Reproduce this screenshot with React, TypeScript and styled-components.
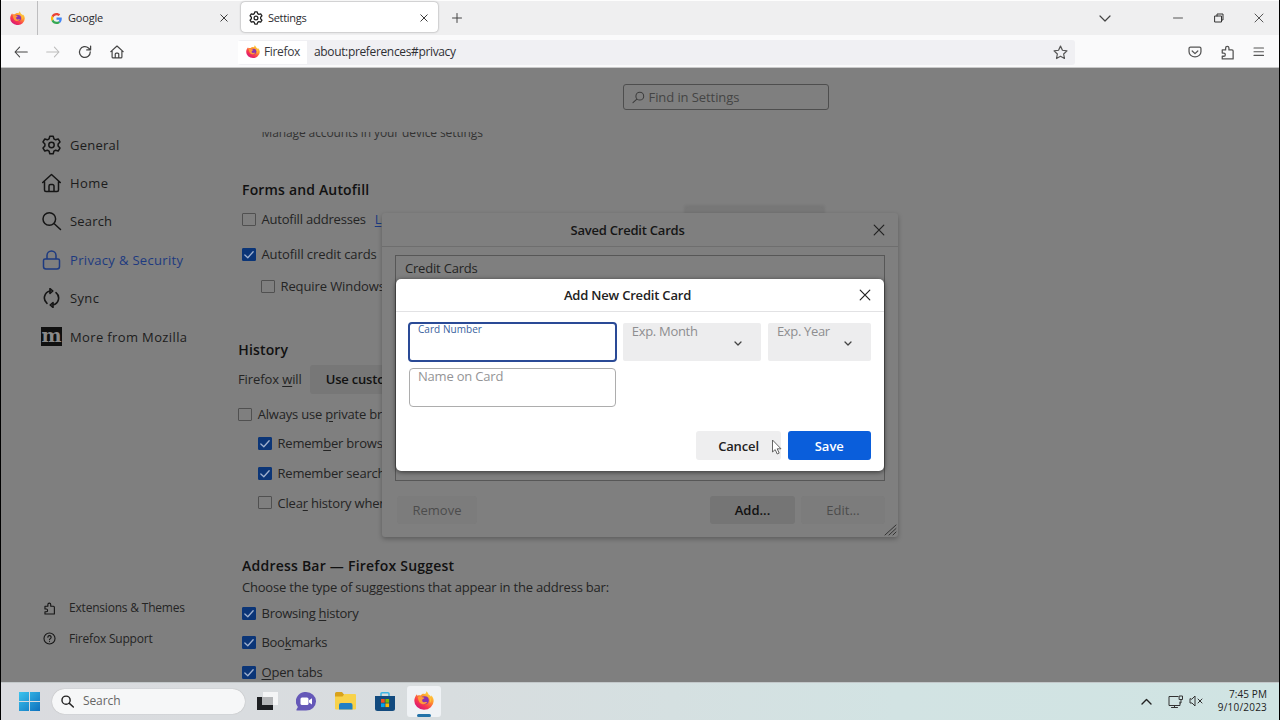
import React from "react";
import styled, { createGlobalStyle, css } from "styled-components";

const Global = createGlobalStyle`
  * { box-sizing: border-box; }
  body { margin: 0; background: #000; font-family: "Open Sans", "Noto Sans", sans-serif; font-size: 13px; }
  svg { display: block; flex: none; }
`;

const Screen = styled.div`
  width: 1280px;
  height: 720px;
  padding: 0 1px;
  background: #000;
  display: flex;
  flex-direction: column;
  overflow: hidden;
  position: relative;
`;

const Text = styled.span<{ $size?: number; $ls?: number; $color?: string; $weight?: number }>`
  font-size: ${(p) => p.$size ?? 13}px;
  letter-spacing: ${(p) => p.$ls ?? -0.2}px;
  color: ${(p) => p.$color ?? "#242424"};
  font-weight: ${(p) => p.$weight ?? 400};
  line-height: 20px;
  white-space: nowrap;
  u { text-underline-offset: 2px; }
`;

/* ---------- browser chrome ---------- */
const TabBar = styled.div`
  height: 35px;
  flex: none;
  display: flex;
  background: #efeff0;
  border-top: 1px solid #fdfdfd;
`;
const PinnedTab = styled.div`
  width: 37px;
  padding-left: 9px;
  display: flex;
  align-items: center;
  border-right: 1px solid #bdbdbf;
`;
const Tab = styled.div<{ $active?: boolean; $width: number }>`
  width: ${(p) => p.$width}px;
  display: flex;
  align-items: center;
  padding: ${(p) => (p.$active ? "1px 10px 0 8px" : "0 13px 0 12.5px")};
  gap: ${(p) => (p.$active ? 5 : 6.5)}px;
  ${(p) =>
    p.$active &&
    css`
      height: 30px;
      margin-top: 1px;
      background: #fff;
      border-radius: 4px;
      box-shadow: 0 0 2px rgba(0, 0, 0, 0.45);
    `}
`;
const Spacer = styled.div`
  flex: 1;
`;
const NewTab = styled.div`
  width: 38px;
  display: grid;
  place-items: center;
`;
const WindowControls = styled.div`
  display: flex;
  align-items: center;
  gap: 30.5px;
  padding-right: 15px;
`;
const ListTabs = styled.div`
  display: flex;
  align-items: center;
  padding-right: 62px;
`;
const NavBar = styled.div`
  height: 33px;
  flex: none;
  display: flex;
  align-items: center;
  padding-top: 2px;
  background: #fafafb;
  border-bottom: 1px solid #c9c9c9;
`;
const NavButtons = styled.div`
  width: 237px;
  padding-left: 13px;
  display: flex;
  align-items: center;
  gap: 18px;
`;
const UrlBar = styled.div`
  width: 837px;
  height: 25px;
  display: flex;
  align-items: center;
  background: #f0f0f3;
  border-radius: 3px;
  padding-right: 7px;
`;
const Identity = styled.div`
  width: 69px;
  height: 23px;
  display: flex;
  align-items: center;
  gap: 4px;
  padding-left: 8px;
  margin-right: 7px;
  background: #fff;
`;
const ToolbarIcons = styled.div`
  flex: 1;
  display: flex;
  align-items: center;
  justify-content: flex-end;
  gap: 18px;
  padding-right: 14px;
`;

/* ---------- preferences page ---------- */
const Page = styled.div`
  height: 614px;
  flex: none;
  display: flex;
  background: #7f7f7f;
  overflow: hidden;
`;
const Sidebar = styled.div`
  width: 237px;
  padding: 57.5px 0 0 40px;
  display: flex;
  flex-direction: column;
`;
const Category = styled.div`
  height: 38.4px;
  display: flex;
  align-items: center;
  gap: 8px;
`;
const SideFooter = styled.div`
  margin-top: 237px;
  padding-left: 2px;
`;
const FooterLink = styled.div`
  height: 30.5px;
  display: flex;
  align-items: center;
  gap: 13px;
`;
const Main = styled.div`
  flex: 1;
  display: flex;
  flex-direction: column;
`;
const SearchArea = styled.div`
  height: 64px;
  flex: none;
  padding: 16px 0 0 385px;
`;
const FindBox = styled.div`
  width: 206px;
  height: 26px;
  display: flex;
  align-items: center;
  gap: 3.5px;
  padding-left: 8px;
  border: 1px solid #4e4e4e;
  border-radius: 3px;
`;
const Scroller = styled.div`
  flex: 1;
  overflow: hidden;
  display: flex;
  flex-direction: column;
`;
const Row = styled.div<{ $top: number; $left: number }>`
  height: 20px;
  flex: none;
  display: flex;
  align-items: center;
  margin-top: ${(p) => p.$top}px;
  padding-left: ${(p) => p.$left}px;
`;
const Box = styled.span<{ $checked?: boolean }>`
  width: 14px;
  height: 13px;
  flex: none;
  margin-right: 5.5px;
  display: grid;
  place-items: center;
  border-radius: 1px;
  border: 1px solid ${(p) => (p.$checked ? "#0b3577" : "#505050")};
  background: ${(p) => (p.$checked ? "#0b3577" : "transparent")};
`;
const LearnMore = styled.span`
  margin-left: 9px;
`;
const HistoryMode = styled.div`
  width: 90px;
  height: 29px;
  margin-left: 8px;
  padding-left: 16px;
  display: flex;
  align-items: center;
  background: #777;
  border-radius: 3px;
`;

/* ---------- dialogs, stacked over the page ---------- */
const GhostButton = styled.div`
  position: absolute;
  left: 684px;
  top: 205px;
  width: 141px;
  height: 12px;
  background: #777;
  border-radius: 3px;
  filter: blur(1px);
`;
const SavedDialog = styled.div`
  position: absolute;
  left: 382px;
  top: 213px;
  width: 516px;
  height: 324px;
  background: #7f7f7f;
  border-radius: 3px;
  box-shadow: 0 2px 5px rgba(0, 0, 0, 0.27);
  display: flex;
  flex-direction: column;
`;
const DialogHeader = styled.div<{ $height: number; $line: string; $pad: number }>`
  height: ${(p) => p.$height}px;
  flex: none;
  display: flex;
  align-items: center;
  border-bottom: 1px solid ${(p) => p.$line};
  padding-right: ${(p) => p.$pad}px;
`;
const DialogTitle = styled.div`
  flex: 1;
  text-align: center;
`;
const CardList = styled.div`
  height: 226px;
  margin: 8px 13px 0;
  padding: 2px 9px;
  border: 1px solid #575757;
`;
const DialogButtons = styled.div`
  display: flex;
  padding: 15px 13px 0 15px;
  gap: 6px;
`;
const DimButton = styled.div<{ $width: number; $bg: string }>`
  width: ${(p) => p.$width}px;
  height: 28px;
  display: grid;
  place-items: center;
  border-radius: 3px;
  background: ${(p) => p.$bg};
`;
const Grip = styled.div`
  position: absolute;
  right: 1px;
  bottom: 1px;
`;
const AddDialog = styled.div`
  position: absolute;
  left: 396px;
  top: 279px;
  width: 488px;
  height: 192px;
  background: #fff;
  border-radius: 5px;
  box-shadow: 0 1px 5px rgba(0, 0, 0, 0.6);
  display: flex;
  flex-direction: column;
`;
const Form = styled.div`
  display: grid;
  grid-template-columns: 209px 138px 103px;
  grid-template-rows: 40px 39px;
  column-gap: 6.5px;
  row-gap: 6px;
  padding: 10px 12px 0;
`;
const Field = styled.div<{ $focus?: boolean }>`
  margin: ${(p) => (p.$focus ? 0 : "0 1px")};
  padding: 0 8px;
  border: ${(p) => (p.$focus ? "2px solid #2a4a96" : "1px solid #adadad")};
  border-radius: 4px;
  display: flex;
  align-items: flex-start;
  > span { margin-top: ${(p) => (p.$focus ? -5 : -3)}px; }
`;
const Select = styled.div<{ $shift?: number }>`
  margin: 1px ${(p) => p.$shift ?? 0}px 1px -${(p) => p.$shift ?? 0}px;
  padding: 2px 19px 0 9px;
  background: #ededee;
  border-radius: 2px;
  display: flex;
  align-items: center;
  justify-content: space-between;
  > span { align-self: flex-start; margin-top: -4px; }
`;
const Actions = styled.div`
  display: flex;
  justify-content: flex-end;
  gap: 6.5px;
  padding: 24px 13px 0;
`;
const Button = styled.div<{ $primary?: boolean }>`
  width: ${(p) => (p.$primary ? 83.5 : 85)}px;
  height: 29px;
  display: grid;
  place-items: center;
  border-radius: 3px;
  background: ${(p) => (p.$primary ? "#0a5edb" : "#eeeeef")};
`;
const Pointer = styled.div`
  position: absolute;
  left: 771px;
  top: 439px;
`;

/* ---------- taskbar ---------- */
const Taskbar = styled.div`
  height: 38px;
  flex: none;
  display: flex;
  align-items: center;
  background: linear-gradient(90deg, #dadbdf 0%, #d8dddf 35%, #d2e3e3 70%, #d0e4e3 100%);
  border-top: 1px solid #c3c8ca;
  padding: 0 12px 1px 18px;
`;
const TaskSearch = styled.div`
  width: 193px;
  height: 25px;
  margin: 0 11.5px 0 12px;
  padding-left: 9px;
  display: flex;
  align-items: center;
  gap: 9px;
  background: #f6f7f8;
  border-radius: 13px;
  box-shadow: 0 0 1px #999;
`;
const TaskIcons = styled.div`
  display: flex;
  align-items: center;
  gap: 18.8px;
`;
const ActiveApp = styled.div`
  width: 34px;
  height: 31px;
  margin-left: -7px;
  display: flex;
  flex-direction: column;
  align-items: center;
  justify-content: space-between;
  padding-top: 5px;
  background: #eff2f5;
  border-radius: 3px;
`;
const ActiveMark = styled.div`
  width: 14px;
  height: 3px;
  border-radius: 2px;
  background: #2272a8;
`;
const Tray = styled.div`
  display: flex;
  align-items: center;
`;
const TrayGap = styled.div<{ $w: number }>`
  width: ${(p) => p.$w}px;
`;
const Clock = styled.div`
  width: 64px;
  display: flex;
  flex-direction: column;
  align-items: flex-end;
  > span { line-height: 13px; }
`;

/* ---------- icons ---------- */
const Firefox = ({ size }: { size: number }) => (
  <svg width={size} height={size * 0.95} viewBox="0 0 20 20" preserveAspectRatio="none">
    <defs>
      <linearGradient id="ffBody" x1="0.85" y1="0.05" x2="0.2" y2="0.95">
        <stop offset="0" stopColor="#ffe14a" />
        <stop offset="0.35" stopColor="#ff9a2e" />
        <stop offset="0.7" stopColor="#f8374f" />
        <stop offset="1" stopColor="#d3147b" />
      </linearGradient>
    </defs>
    <path
      fill="url(#ffBody)"
      d="M12.2 0.3c1.5 1 2 2.2 2.4 3.4 1.2.6 2 1.4 2.4 2.3.3-.4.2-1 0-1.6 2 1.600 2.700 4 2.700 6.200A9.700 9.300 0 0 1 10 19.700 9.700 9.300 0 0 1 .3 10.300C.3 7.500 1.500 5 3 3.300c0 .8.2 1.300.6 1.700.9-.4 2-.5 3-.3C8 3 9 2.400 11 3.200c.9-.6 1.300-1.600 1.200-2.900z"
    />
    <circle cx="10.600" cy="9.800" r="4.200" fill="#8a33b0" />
    <path fill="#ff9a3a" d="M3.800 6.200c1.700-1 3.400-.6 4.400.3 1.200 0 2 .3 2.200.9-.2.8-1.400.9-2 1.500-.4.9-.3 2 .6 2.600 1.500.9 3-.2 4.200.2-.7 1.700-2.600 2.600-4.600 2.200-2.700-.5-4.300-2.900-4.800-7.700z" />
    <path fill="#ffd23c" opacity=".75" d="M13.500 5c2.700 1.800 3.300 5 2 8.200 2.400-2 2.500-6.500-2-8.200z" />
  </svg>
);

const Google = () => (
  <svg width="11" height="11" viewBox="0 0 48 48">
    <path fill="#ea4335" d="M24 9.500c3.500 0 6.700 1.200 9.200 3.600l6.900-6.900C35.900 2.400 30.500 0 24 0 14.600 0 6.500 5.400 2.600 13.200l8 6.200C12.400 13.700 17.700 9.500 24 9.500z" />
    <path fill="#4285f4" d="M47 24.600c0-1.600-.2-3.100-.4-4.600H24v9h12.900c-.6 3-2.200 5.500-4.700 7.200l7.700 6C44.400 38 47 31.800 47 24.600z" />
    <path fill="#fbbc05" d="M10.500 28.600A14.500 14.500 0 0 1 10.500 19.400l-8-6.200a24 24 0 0 0 0 21.600z" />
    <path fill="#34a853" d="M24 48c6.500 0 11.900-2.100 15.900-5.800l-7.700-6c-2.200 1.500-4.900 2.300-8.200 2.300-6.300 0-11.600-4.200-13.500-9.900l-8 6.200C6.500 42.600 14.600 48 24 48z" />
  </svg>
);

const Stroke = ({ d, size = 14, h, vb = "0 0 20 20", color = "#3f3f43", sw = 1.5 }: {
  d: string; size?: number; h?: number; vb?: string; color?: string; sw?: number;
}) => (
  <svg width={size} height={h ?? size} viewBox={vb} fill="none" stroke={color} strokeWidth={sw} strokeLinecap="round" strokeLinejoin="round">
    <path d={d} />
  </svg>
);

const GEAR =
  "M8.300 1.200h3.400l.7 2.600 1.700 1 2.600-.8 1.800 2.900-1.900 2v2.200l1.900 2-1.800 2.900-2.600-.8-1.700 1-.7 2.600H8.300l-.7-2.600-1.700-1-2.600.8-1.800-2.900 1.900-2V8.900l-1.900-2L3.300 4l2.600.8 1.700-1zM7.300 10a2.700 2.700 0 1 0 5.400 0a2.700 2.700 0 1 0-5.400 0";
const HOME = "M1.200 9.500L10 1.500l8.800 8M3 8.500V17a1.500 1.500 0 0 0 1.500 1.500h11A1.500 1.500 0 0 0 17 17V8.500M7.500 18.500V13a1.500 1.500 0 0 1 1.500-1.500h2a1.500 1.500 0 0 1 1.500 1.500v5.500";
const LENS = "M1.500 8a6.300 6.300 0 1 0 12.600 0a6.300 6.300 0 1 0-12.600 0M12.500 12.500L19 18.500";
const LOCK = "M3.500 9h13A1.500 1.500 0 0 1 18 10.500v6a2.500 2.500 0 0 1-2.500 2.500h-11A2.500 2.500 0 0 1 2 16.500v-6A1.500 1.500 0 0 1 3.500 9zM5.500 9V5.500a4.500 4.500 0 0 1 9 0V9";
const SYNC = "M8.500 3A7 7 0 0 0 5.500 15.300M11.500 17A7 7 0 0 0 14.500 4.700M8.500 0.600V5.400L11.300 3zM11.500 14.600v4.800L8.700 17z";
const PUZZLE = "M3 6.500h4.500V4a2.200 2.200 0 0 1 4.400 0v2.500H16a1.500 1.500 0 0 1 1.500 1.500v10.500H3v-3.500h2a2.100 2.100 0 0 0 0-4.200H3z";
const CROSS = "M2 2l16 16M18 2L2 18";

const Check = ({ on }: { on?: boolean }) => (
  <Box $checked={on}>
    {on && <Stroke d="M2 6l3.200 3L11 2.500" size={12} h={11} vb="0 0 13 11" color="#9fb1cf" sw={1.4} />}
  </Box>
);

const MozillaMark = styled.span`
  width: 21px;
  height: 19px;
  flex: none;
  display: flex;
  justify-content: center;
  background: #101010;
  color: #8a8a8a;
  font: 700 19px/17px "DejaVu Serif", serif;
`;

const dim = "#151515";
const categories = [
  { label: "General", ls: 0.25, icon: <Stroke d={GEAR} size={21} h={20} color={dim} /> },
  { label: "Home", ls: 0.4, icon: <Stroke d={HOME} size={21} h={20} color={dim} /> },
  { label: "Search", ls: 0.17, icon: <Stroke d={LENS} size={21} h={20} color={dim} /> },
  { label: "Privacy & Security", ls: 0.33, icon: <Stroke d={LOCK} size={21} h={20} color="#1d3a80" />, color: "#1d3a80" },
  { label: "Sync", ls: 0.35, icon: <Stroke d={SYNC} size={21} h={20} color={dim} sw={1.6} /> },
  { label: "More from Mozilla", ls: 0.37, icon: <MozillaMark>m</MozillaMark> },
];

const Heading = ({ children, ls = 0.17 }: { children: React.ReactNode; ls?: number }) => (
  <Text $weight={600} $size={14} $color="#111" $ls={ls}>{children}</Text>
);

export default function App() {
  return (
    <>
      <Global />
      <Screen>
        <TabBar>
          <PinnedTab><Firefox size={15} /></PinnedTab>
          <Tab $width={203}>
            <Google />
            <Text $size={11} $color="#2b2b2f" $ls={-0.2}>Google</Text>
            <Spacer />
            <Stroke d={CROSS} size={8} color="#333" sw={2.4} />
          </Tab>
          <Tab $active $width={197}>
            <Stroke d={GEAR} size={14} color="#222" sw={1.8} />
            <Text $size={11} $color="#2b2b2f" $ls={-0.3}>Settings</Text>
            <Spacer />
            <Stroke d={CROSS} size={8} color="#333" sw={2.4} />
          </Tab>
          <NewTab><Stroke d="M10 1v18M1 10h18" size={10} color="#444" sw={2} /></NewTab>
          <Spacer />
          <ListTabs><Stroke d="M1 1l5 5 5-5" size={12} h={7} vb="0 0 12 7" color="#444" sw={1.2} /></ListTabs>
          <WindowControls>
            <Stroke d="M0.500 1h9" size={10} h={2} vb="0 0 10 2" color="#555" sw={1} />
            <Stroke d="M1 3h6.500v6H1zM3 3V1h6v6H7.500" size={10} vb="0 0 10 10" color="#333" sw={1} />
            <Stroke d={CROSS} size={10} color="#444" sw={1.8} />
          </WindowControls>
        </TabBar>

        <NavBar>
          <NavButtons>
            <Stroke d="M19 10H1.500M8 3l-6.500 7L8 17" size={14} color="#444" />
            <Stroke d="M1 10h17.500M12 3l6.500 7-6.500 7" size={14} color="#bbb" />
            <Stroke d="M17.500 10a7.700 7.700 0 1 1-2.500-5.600L18 7M18 1.500V7h-5.500" size={14} color="#444" sw={1.8} />
            <Stroke d={HOME} size={14} color="#444" sw={1.7} />
          </NavButtons>
          <UrlBar>
            <Identity>
              <Firefox size={14} />
              <Text $size={12} $color="#3a3a3e" $ls={-0.35}>Firefox</Text>
            </Identity>
            <Text $size={12} $color="#2f2f33" $ls={-0.35}>about:preferences#privacy</Text>
            <Spacer />
            <Stroke d="M10 1.500l2.600 5.500 6 .8-4.400 4.200 1.100 6L10 15.100 4.700 18l1.100-6L1.400 7.800l6-.8z" size={15} color="#555" sw={1.6} />
          </UrlBar>
          <ToolbarIcons>
            <Stroke d="M3.500 3h13A2 2 0 0 1 18.500 5v4.500a8.500 7.500 0 0 1-17 0V5a2 2 0 0 1 2-2zM6 8.500l4 3.800 4-3.800" size={14} color="#555" sw={1.8} />
            <Stroke d={PUZZLE} size={15} color="#555" sw={1.7} />
            <Stroke d="M1 1h9.500M1 4.700h9.500M1 8.400h9.500" size={12} h={10} vb="0 0 12 10" color="#555" sw={1.1} />
          </ToolbarIcons>
        </NavBar>

        <Page>
          <Sidebar>
            {categories.map((c) => (
              <Category key={c.label}>
                {c.icon}
                <Text $color={c.color ?? "#1c1c1c"} $ls={c.ls}>{c.label}</Text>
              </Category>
            ))}
            <SideFooter>
              <FooterLink>
                <Stroke d={PUZZLE} size={13} color={dim} sw={1.7} />
                <Text $size={12}>Extensions &amp; Themes</Text>
              </FooterLink>
              <FooterLink>
                <Stroke d="M1.500 10a8.500 8.500 0 1 0 17 0a8.500 8.500 0 1 0-17 0M7.500 8a2.500 2.500 0 1 1 3.800 2.200c-.9.6-1.300.9-1.300 1.800M10 14.600v.2" size={13} color={dim} sw={1.7} />
                <Text $size={12}>Firefox Support</Text>
              </FooterLink>
            </SideFooter>
          </Sidebar>

          <Main>
            <SearchArea>
              <FindBox>
                <Stroke d="M6 8a6 6 0 1 0 12 0a6 6 0 1 0-12 0M7.500 12.500L1.500 18" size={13} color="#3c3c3c" sw={1.6} />
                <Text $color="#444" $ls={-0.08}>Find in Settings</Text>
              </FindBox>
            </SearchArea>
            <Scroller>
              <Row $top={-9} $left={23.5}><Text $size={12} $color="#333" $ls={-0.11}>Manage accounts in your device settings</Text></Row>
              <Row $top={37} $left={4}><Heading>Forms and Autofill</Heading></Row>
              <Row $top={9} $left={4}><Check /><Text>Autofill addresses</Text><LearnMore><Text $color="#1d3a80"><u>L</u></Text></LearnMore></Row>
              <Row $top={15} $left={4}><Check on /><Text $ls={-0.1}>Autofill credit cards</Text></Row>
              <Row $top={12} $left={23}><Check /><Text $ls={-0.1}>Require Windows</Text></Row>
              <Row $top={44} $left={0.2}><Heading>History</Heading></Row>
              <Row $top={9} $left={0}>
                <Text $ls={-0.1}>Firefox <u>w</u>ill</Text>
                <HistoryMode><Text $weight={600} $color="#111">Use custom</Text></HistoryMode>
              </Row>
              <Row $top={15} $left={0.2}><Check /><Text>Always use <u>p</u>rivate brow</Text></Row>
              <Row $top={9} $left={20}><Check on /><Text>Remem<u>b</u>er browsing</Text></Row>
              <Row $top={10} $left={20}><Check on /><Text>Remember search</Text></Row>
              <Row $top={9.5} $left={20}><Check /><Text>Clea<u>r</u> history when</Text></Row>
              <Row $top={43.5} $left={4}><Heading ls={0.23}>Address Bar — Firefox Suggest</Heading></Row>
              <Row $top={1} $left={4}><Text $ls={-0.21}>Choose the type of suggestions that appear in the address bar:</Text></Row>
              <Row $top={6} $left={4}><Check on /><Text $ls={-0.27}>Browsing <u>h</u>istory</Text></Row>
              <Row $top={9} $left={4}><Check on /><Text $ls={-0.3}>Boo<u>k</u>marks</Text></Row>
              <Row $top={10} $left={4}><Check on /><Text><u>O</u>pen tabs</Text></Row>
            </Scroller>
          </Main>
        </Page>

        <Taskbar>
          <svg width="21" height="19" viewBox="0 0 21 19">
            <defs>
              <linearGradient id="win" x1="0" y1="0" x2="1" y2="1">
                <stop offset="0" stopColor="#3cc4ee" />
                <stop offset="1" stopColor="#0d70bd" />
              </linearGradient>
            </defs>
            <path fill="url(#win)" d="M0 0h10v9H0zM11 0h10v9H11zM0 10h10v9H0zM11 10h10v9H11z" />
          </svg>
          <TaskSearch>
            <Stroke d={LENS} size={13} color="#222" sw={2.2} />
            <Text $size={12} $color="#666" $ls={-0.1}>Search</Text>
          </TaskSearch>
          <TaskIcons>
            <svg width="21" height="18" viewBox="0 0 21 18">
              <rect x="6" y="0" width="15" height="13" fill="#f4f5f6" />
              <rect x="0" y="5" width="16" height="13" fill="#1d1f22" />
              <rect x="5" y="5" width="11" height="8" fill="#b4b6b8" />
            </svg>
            <svg width="20" height="19" viewBox="0 0 20 19">
              <path fill="#6558b8" d="M10 0a10 9.300 0 1 1 0 18.600H1.200c-.8 0-1-.7-.6-1.300L1.900 15A9.500 9.300 0 0 1 10 0z" />
              <rect x="4.500" y="5.500" width="8" height="7.500" rx="1.500" fill="#fff" />
              <path fill="#fff" d="M13 8.200l3-2v6.200l-3-2z" />
            </svg>
            <svg width="21" height="18" viewBox="0 0 21 18">
              <path fill="#d9a21b" d="M0 1.500A1.500 1.500 0 0 1 1.500 0H7l2 2.500V8H0z" />
              <path fill="#f8d24a" d="M0 4.500h7.500L9.500 2H20a1 1 0 0 1 1 1v13.500a1 1 0 0 1-1 1H1a1 1 0 0 1-1-1z" />
              <path fill="#1f7fc4" d="M4 17.500V13a2 2 0 0 1 2-2h9.500a2 2 0 0 1 2 2v4.500z" />
            </svg>
            <svg width="20" height="19" viewBox="0 0 20 19">
              <path fill="none" stroke="#3bb4e4" strokeWidth="1.500" d="M6 4V1.800A1 1 0 0 1 7 .8h6a1 1 0 0 1 1 1V4" />
              <path fill="#124a7e" d="M0 4h20v12.500A2.500 2.500 0 0 1 17.500 19h-15A2.500 2.500 0 0 1 0 16.500z" />
              <path fill="#f25022" d="M6 7h3.700v3.700H6z" />
              <path fill="#7fba00" d="M10.400 7h3.700v3.700h-3.700z" />
              <path fill="#00a4ef" d="M6 11.400h3.700v3.700H6z" />
              <path fill="#ffb900" d="M10.400 11.400h3.700v3.700h-3.700z" />
            </svg>
            <ActiveApp><Firefox size={20} /><ActiveMark /></ActiveApp>
          </TaskIcons>
          <Spacer />
          <Tray>
            <Stroke d="M1 6l4.500-4.500L10 6" size={11} h={7} vb="0 0 11 7" color="#222" sw={1.4} />
            <TrayGap $w={16} />
            <Stroke d="M10 1.500H1v9h11V7M3.500 12.500h6M6.500 10.500v2M11.500 1h3v3.500h-3zM13 4.500V8h-1" size={15} h={13} vb="0 0 15 13" color="#333" sw={1} />
            <TrayGap $w={6} />
            <Stroke d="M1 4v4h2l3 3V1L3 4zM9 4l4 4M13 4L9 8" size={14} h={12} vb="0 0 14 12" color="#333" sw={1} />
            <Clock>
              <Text $size={10} $color="#222" $ls={0.1}>7:45 PM</Text>
              <Text $size={10} $color="#222" $ls={0.2}>9/10/2023</Text>
            </Clock>
          </Tray>
        </Taskbar>

        <GhostButton />
        <SavedDialog>
          <DialogHeader $height={34} $line="#6e6e6e" $pad={13}>
            <DialogTitle><Text $weight={600} $color="#161616" $ls={-0.22}>Saved Credit Cards</Text></DialogTitle>
            <Stroke d={CROSS} size={12} color="#222" sw={2} />
          </DialogHeader>
          <CardList><Text>Credit Cards</Text></CardList>
          <DialogButtons>
            <DimButton $width={80} $bg="#7c7c7c"><Text $color="#4c4c4c" $ls={0}>Remove</Text></DimButton>
            <Spacer />
            <DimButton $width={85} $bg="#757575"><Text $weight={600} $color="#111" $ls={0}>Add...</Text></DimButton>
            <DimButton $width={84} $bg="#7c7c7c"><Text $color="#4c4c4c" $ls={0}>Edit...</Text></DimButton>
          </DialogButtons>
          <Grip><Stroke d="M1 11L12 1M5 11l7-6.500M9 11l3-3" size={13} h={12} vb="0 0 13 12" color="#333" sw={1} /></Grip>
        </SavedDialog>

        <AddDialog>
          <DialogHeader $height={33} $line="#e2e2e4" $pad={13}>
            <DialogTitle><Text $weight={600} $color="#222" $ls={-0.2}>Add New Credit Card</Text></DialogTitle>
            <Stroke d={CROSS} size={12} color="#222" sw={2} />
          </DialogHeader>
          <Form>
            <Field $focus><Text $size={10} $color="#3a629e" $ls={0.05}>Card Number</Text></Field>
            <Select $shift={0.75}>
              <Text $color="#8e8e90" $ls={-0.3}>Exp. Month</Text>
              <Stroke d="M1 1l3 3 3-3" size={8} h={5} vb="0 0 8 5" color="#444" sw={1.3} />
            </Select>
            <Select>
              <Text $color="#8e8e90" $ls={-0.35}>Exp. Year</Text>
              <Stroke d="M1 1l3 3 3-3" size={8} h={5} vb="0 0 8 5" color="#444" sw={1.3} />
            </Select>
            <Field><Text $color="#949496">Name on Card</Text></Field>
          </Form>
          <Actions>
            <Button><Text $weight={600} $color="#222" $ls={-0.15}>Cancel</Text></Button>
            <Button $primary><Text $weight={600} $color="#fff" $ls={0}>Save</Text></Button>
          </Actions>
        </AddDialog>
        <Pointer>
          <svg width="11" height="17" viewBox="0 0 11 17">
            <path d="M1.500 1v12l2.700-2.400 2 4.400 2-.9-2-4.300H10z" fill="#fff" stroke="#555" strokeWidth="0.900" />
          </svg>
        </Pointer>
      </Screen>
    </>
  );
}
